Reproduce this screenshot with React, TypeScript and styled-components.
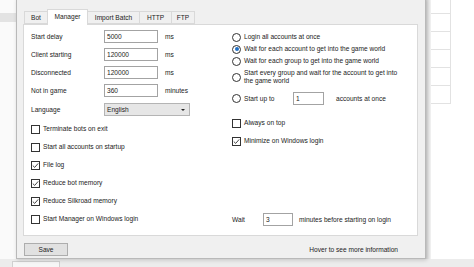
import React from "react";
import styled, { createGlobalStyle } from "styled-components";

const Global = createGlobalStyle`
  html, body { margin: 0; padding: 0; }
  body {
    width: 474px; height: 267px; overflow: hidden; background: #fff;
    font-family: "Liberation Sans", Arial, sans-serif;
  }
  * { box-sizing: border-box; }
`;

const Desktop = styled.div`
  position: relative;
  width: 474px;
  height: 267px;
  overflow: hidden;
  display: flex;
  flex-direction: column;
  background: #fff;
`;

const BackMain = styled.div`
  flex: 1;
  display: flex;
`;

const LeftList = styled.div`
  width: 17px;
  display: flex;
  flex-direction: column;
`;

const ListRow = styled.div<{ $h: number; $sel?: boolean }>`
  height: ${(p) => p.$h}px;
  background: ${(p) => (p.$sel ? "#e3e3e3" : "#fafafa")};
`;

const Spacer = styled.div`
  flex: 1;
`;

const RightGrid = styled.div`
  width: 48px;
  display: flex;
`;

const Shadow = styled.div`
  width: 5px;
  background: linear-gradient(to right, #d6d6d6, #f4f4f4);
`;

const GridCol = styled.div`
  width: 20px;
  height: 104px;
  border-right: 1px solid #e2e2e2;
  background-image: repeating-linear-gradient(
    to bottom,
    transparent 0px,
    transparent 13px,
    #e2e2e2 13px,
    #e2e2e2 14px,
    transparent 14px,
    transparent 18px
  );
  background-position: 0 0;
`;

const BottomBar = styled.div`
  height: 8px;
  background: #ececec;
  display: flex;
  align-items: flex-end;
  padding-left: 12px;
`;

const BottomBox = styled.div`
  width: 48px;
  height: 6px;
  border: 1px solid #d0d0d0;
  border-bottom: none;
  background: #f6f6f6;
`;

const Window = styled.div`
  position: absolute;
  left: 16px;
  top: -2px;
  width: 410px;
  height: 261px;
  background: #f0f0f0;
  border: 1px solid #b9b9b9;
  box-shadow: 1px 1px 4px rgba(0, 0, 0, 0.18);
  padding: 10px 7px 0 6px;
  display: flex;
  flex-direction: column;
  font-size: 6.6px;
  line-height: 8px;
  color: #222;
`;

const TabBar = styled.div`
  display: flex;
  align-items: flex-end;
  height: 15px;
  margin-left: 2px;
  position: relative;
  z-index: 1;
`;

const Tab = styled.div<{ $w: number; $active?: boolean }>`
  width: ${(p) => p.$w}px;
  height: ${(p) => (p.$active ? 16 : 13)}px;
  margin-bottom: ${(p) => (p.$active ? -1 : 0)}px;
  background: ${(p) => (p.$active ? "#fff" : "#f0f0f0")};
  border: 1px solid #d9d9d9;
  border-bottom: ${(p) => (p.$active ? "none" : "1px solid #d9d9d9")};
  margin-left: -1px;
  display: flex;
  align-items: center;
  justify-content: center;
  padding-bottom: ${(p) => (p.$active ? 2 : 0)}px;
`;

const Panel = styled.div`
  height: 212px;
  background: #fff;
  border: 1px solid #d9d9d9;
  display: grid;
  grid-template-columns: 201px 1fr;
  padding-left: 7px;
`;

const LeftCol = styled.div`
  display: flex;
  flex-direction: column;
  padding-top: 5px;
`;

const FieldRow = styled.div<{ $mt?: number }>`
  display: grid;
  grid-template-columns: 73px auto auto;
  align-items: center;
  height: 13px;
  margin-top: ${(p) => p.$mt ?? 0}px;
  justify-content: start;
`;

const TextBox = styled.div<{ $w: number }>`
  width: ${(p) => p.$w}px;
  height: 13px;
  border: 1px solid #a3a3a3;
  background: #fff;
  padding-left: 2px;
  display: flex;
  align-items: center;
`;

const Unit = styled.span<{ $ml?: number }>`
  margin-left: ${(p) => p.$ml ?? 7}px;
`;

const Select = styled.div`
  width: 86px;
  height: 13px;
  border: 1px solid #b4b4b4;
  background: #e6e6e6;
  padding: 0 4px 0 2px;
  display: flex;
  align-items: center;
  justify-content: space-between;
`;

const Arrow = styled.span`
  width: 0;
  height: 0;
  border-left: 2px solid transparent;
  border-right: 2px solid transparent;
  border-top: 2.5px solid #222;
`;

const CheckRow = styled.div<{ $mt?: number }>`
  display: flex;
  align-items: center;
  height: 18px;
  gap: 3px;
  margin-top: ${(p) => p.$mt ?? 0}px;
`;

const Box = styled.span`
  width: 9px;
  height: 9px;
  border: 1px solid #333;
  background: #fff;
  display: flex;
  align-items: center;
  justify-content: center;
  flex-shrink: 0;
`;

const RightCol = styled.div`
  display: flex;
  flex-direction: column;
  padding-top: 6px;
  padding-bottom: 9px;
`;

const RadioRow = styled.div<{ $h?: number; $mt?: number }>`
  display: flex;
  align-items: center;
  gap: 3px;
  height: ${(p) => p.$h ?? 12}px;
  margin-top: ${(p) => p.$mt ?? 0}px;
`;

const Radio = styled.span<{ $on?: boolean }>`
  width: 9px;
  height: 9px;
  border-radius: 50%;
  border: 1px solid #333;
  background: #fff;
  flex-shrink: 0;
  display: flex;
  align-items: center;
  justify-content: center;
  &::after {
    content: "";
    width: 4px;
    height: 4px;
    border-radius: 50%;
    background: ${(p) => (p.$on ? "#1f6fc5" : "transparent")};
  }
`;

const InlineRow = styled.div<{ $mt?: string }>`
  display: flex;
  align-items: center;
  height: 13px;
  margin-top: ${(p) => p.$mt ?? "0"};
`;

const Label = styled.span<{ $w: number }>`
  width: ${(p) => p.$w}px;
  flex-shrink: 0;
`;

const Footer = styled.div`
  flex: 1;
  display: flex;
  align-items: flex-start;
  justify-content: space-between;
  padding: 7px 20px 0 1px;
`;

const Button = styled.div`
  width: 44px;
  height: 13px;
  background: #e1e1e1;
  border: 1px solid #adadad;
  display: flex;
  align-items: center;
  justify-content: center;
`;

const Hint = styled.span`
  line-height: 13px;
`;

const Check = () => (
  <svg width="7" height="7" viewBox="0 0 7 7">
    <path d="M0.8 3.6 L2.7 5.4 L6.2 1.4" fill="none" stroke="#333" strokeWidth="0.9" />
  </svg>
);

const CheckItem = ({ on, label, mt }: { on?: boolean; label: string; mt?: number }) => (
  <CheckRow $mt={mt}>
    <Box>{on && <Check />}</Box>
    <span>{label}</span>
  </CheckRow>
);

export default function App() {
  return (
    <>
      <Global />
      <Desktop>
        <BackMain>
          <LeftList>
            <ListRow $h={13} />
            <ListRow $h={9} $sel />
            <ListRow $h={237} />
          </LeftList>
          <Spacer />
          <RightGrid>
            <Shadow />
            <GridCol />
          </RightGrid>
        </BackMain>
        <BottomBar>
          <BottomBox />
        </BottomBar>
        <Window>
          <TabBar>
            <Tab $w={24}>Bot</Tab>
            <Tab $w={41} $active>Manager</Tab>
            <Tab $w={53}>Import Batch</Tab>
            <Tab $w={33}>HTTP</Tab>
            <Tab $w={24}>FTP</Tab>
          </TabBar>
          <Panel>
            <LeftCol>
              <FieldRow>
                <span>Start delay</span>
                <TextBox $w={54}>5000</TextBox>
                <Unit>ms</Unit>
              </FieldRow>
              <FieldRow $mt={5}>
                <span>Client starting</span>
                <TextBox $w={54}>120000</TextBox>
                <Unit>ms</Unit>
              </FieldRow>
              <FieldRow $mt={5}>
                <span>Disconnected</span>
                <TextBox $w={54}>120000</TextBox>
                <Unit>ms</Unit>
              </FieldRow>
              <FieldRow $mt={5}>
                <span>Not in game</span>
                <TextBox $w={54}>360</TextBox>
                <Unit>minutes</Unit>
              </FieldRow>
              <FieldRow $mt={6}>
                <span>Language</span>
                <Select>
                  <span>English</span>
                  <Arrow />
                </Select>
              </FieldRow>
              <CheckItem label="Terminate bots on exit" mt={4} />
              <CheckItem label="Start all accounts on startup" />
              <CheckItem label="File log" on />
              <CheckItem label="Reduce bot memory" on />
              <CheckItem label="Reduce Silkroad memory" on />
              <CheckItem label="Start Manager on Windows login" />
            </LeftCol>
            <RightCol>
              <RadioRow>
                <Radio />
                <span>Login all accounts at once</span>
              </RadioRow>
              <RadioRow>
                <Radio $on />
                <span>Wait for each account to get into the game world</span>
              </RadioRow>
              <RadioRow>
                <Radio />
                <span>Wait for each group to get into the game world</span>
              </RadioRow>
              <RadioRow $h={16} $mt={2}>
                <Radio />
                <span>
                  Start every group and wait for the account to get into
                  <br />
                  the game world
                </span>
              </RadioRow>
              <InlineRow $mt="7px">
                <Radio />
                <Label $w={49} style={{ marginLeft: 3 }}>Start up to</Label>
                <TextBox $w={31}>1</TextBox>
                <Unit $ml={12}>accounts at once</Unit>
              </InlineRow>
              <CheckItem label="Always on top" mt={9} />
              <CheckItem label="Minimize on Windows login" on />
              <InlineRow $mt="auto">
                <Label $w={31}>Wait</Label>
                <TextBox $w={30}>3</TextBox>
                <Unit $ml={6}>minutes before starting on login</Unit>
              </InlineRow>
            </RightCol>
          </Panel>
          <Footer>
            <Button>Save</Button>
            <Hint>Hover to see more information</Hint>
          </Footer>
        </Window>
      </Desktop>
    </>
  );
}
